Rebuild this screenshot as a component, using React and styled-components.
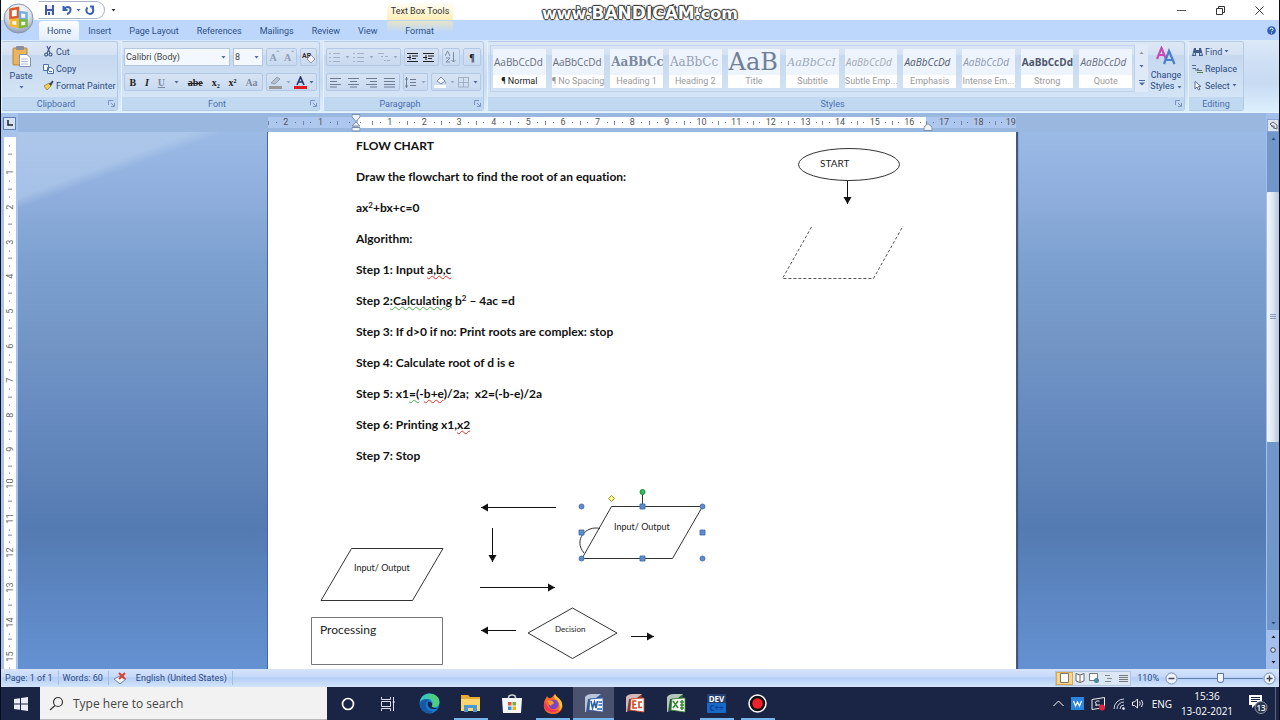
import styled, { createGlobalStyle } from "styled-components";

const GlobalStyle = createGlobalStyle`
  * { box-sizing: border-box; }
  body { margin: 0; font-family: Roboto, "Noto Sans", sans-serif; font-size: 9px; }
  button, input, select { font: inherit; color: inherit; margin: 0; }
  button { background: none; border: 0; padding: 0; }
  p { margin: 0; }
`;

const Window = styled.div`
  display: flex;
  flex-direction: column;
  height: 100vh;
  overflow: hidden;
  color: #2b4a80;
  background: #9ab7e0;
  border: solid #0a0d1c;
  border-width: 0 1px;
`;

/* ---------- title bar ---------- */

const TitleBar = styled.header`
  position: relative;
  display: grid;
  grid-template-columns: 386px 66px 1fr auto;
  flex: none;
  height: 20px;
  background: #fff;
`;

const QuickAccess = styled.div`
  display: flex;
  align-items: center;
  gap: 6px;
  padding-left: 37px;
`;

const QuickGroup = styled.div`
  display: flex;
  align-items: center;
  gap: 4px;
  height: 18px;
  padding: 0 9px 0 6px;
  border: 1px solid #a9b4c6;
  border-left-color: transparent;
  border-radius: 0 9px 9px 0;
`;

const IconButton = styled.button`
  display: flex;
  align-items: center;
  justify-content: center;
  gap: 2px;
`;

const OfficeButton = styled.button`
  position: absolute;
  z-index: 2;
  left: 2px;
  top: 3px;
  width: 31px;
  height: 31px;
`;

const ContextHeader = styled.div`
  margin-top: 3px;
  line-height: 16px;
  text-align: center;
  color: #333;
  background: linear-gradient(#fffdf6, #fbeeb4);
`;

const DocTitle = styled.div`
  padding-left: 122px;
  line-height: 20px;
  font-size: 10px;
  color: #444;
`;

const Watermark = styled.div`
  position: absolute;
  left: 50%;
  top: 4px;
  transform: translateX(-50%);
  font: bold 17px/18px "DejaVu Sans", sans-serif;
  color: #fff;
  text-shadow: 1px 0 1px #333, -1px 0 1px #333, 0 1px 1px #333, 0 -1px 1px #333, 0 0 2px #555;
  white-space: nowrap;

  small { font-size: 16px; }
`;

const WindowButtons = styled.div`
  display: flex;
  gap: 30px;
  padding-right: 15px;
`;

/* ---------- ribbon ---------- */

const TabStrip = styled.nav`
  display: flex;
  flex: none;
  align-items: stretch;
  height: 20px;
  padding: 1px 3px 0 38px;
  background: #bdd7fc;
`;

const Tab = styled.button`
  padding: 0 9px;
  color: #2e5086;
  border-radius: 3px 3px 0 0;
  ${(p) => p.$active && "background: linear-gradient(#fafdff, #e4eefb); padding: 0 8px;"}
`;

const ContextTab = styled(Tab)`
  width: 66px;
  background: linear-gradient(#e6e4c8, #bdd7fc 60%);
`;

const Spacer = styled.div`
  flex: 1;
`;

const Ribbon = styled.div`
  display: flex;
  flex: none;
  gap: 3px;
  height: 73px;
  padding: 1px 35px 1px 0;
  background: linear-gradient(#dce9f8, #cfe0f5 30%, #c8dbf3 60%, #dcf0fd);
  border-bottom: 1px solid #e2f4ff;
`;

const GroupBox = styled.section`
  display: flex;
  flex-direction: column;
  flex: ${(p) => (p.$width ? `0 0 ${p.$width}px` : "1 1 0")};
  min-width: 0;
  border: 1px solid #b4cbe8;
  border-left-color: #e8f2fd;
  border-radius: 3px;
  background: linear-gradient(#dde8f6 0, #d5e2f3 18%, #c6d8ef 20%, #d8e8f8 100%);
`;

const GroupBody = styled.div`
  display: flex;
  flex: 1;
  min-height: 0;
`;

const GroupFooter = styled.footer`
  display: flex;
  align-items: center;
  height: 13px;
  padding: 0 2px;
  color: #4c6fae;
  background: #c1d8f1;

  span { flex: 1; text-align: center; }
`;

const BigButton = styled.button`
  display: flex;
  flex-direction: column;
  align-items: center;
  gap: 4px;
  width: ${(p) => p.$width}px;
  padding-top: 4px;
  line-height: 11px;
`;

const ButtonStack = styled.div`
  display: flex;
  flex-direction: column;
  gap: 4px;
  padding: 3px 0 0 3px;
`;

const SmallButton = styled.button`
  display: flex;
  align-items: center;
  gap: 2px;
  height: 13px;
  white-space: nowrap;
`;

const Rows = styled.div`
  display: flex;
  flex: 1;
  flex-direction: column;
  gap: 7px;
  padding: 6px 2px 0 2px;
`;

const ToolRow = styled.div`
  display: flex;
  gap: 3px;
  height: 18px;
`;

const ToolSet = styled.div`
  display: flex;
  align-items: center;
  justify-content: space-around;
  flex: ${(p) => p.$grow ?? 1} 1 0;
  border: 1px solid #b3c8e5;
  border-radius: 2px;
  color: ${(p) => (p.$dim ? "#8d9ab0" : "#222")};
  font: bold 10px "Liberation Serif", serif;
  background: linear-gradient(#d6e3f4, #c9daf0);

  sup { font-size: 8px; line-height: 0; }
`;

const FaintButton = styled.button`
  color: #7c899f;
`;

const Combo = styled.label`
  display: flex;
  align-items: center;
  flex: 0 0 ${(p) => p.$width}px;
  padding-right: 3px;
  border: 1px solid #b3c7e1;
  background: #f3f8fe;
  color: #444;

  select {
    flex: 1;
    min-width: 0;
    appearance: none;
    border: 0;
    background: none;
    padding: 0 1px;
  }
`;

const Gallery = styled.div`
  display: flex;
  flex: 1;
  gap: 6px;
  height: 47px;
  margin: 3px 0 0 2px;
  padding: 3px 2px;
  border: 1px solid #bfd3ec;
`;

const StyleCard = styled.button`
  display: flex;
  flex-direction: column;
  flex: 1 1 0;
  min-width: 0;
  background: #fff;
  color: ${(p) => (p.$active ? "#222" : "#9a9a9a")};
`;

const StyleSample = styled.span`
  height: 27px;
  width: 100%;
  padding-left: 1px;
  overflow: hidden;
  text-align: left;
  white-space: nowrap;
  background: #eef4fe;
  font-family: ${(p) => (p.$serif ? '"DejaVu Serif", "Liberation Serif", serif' : '"Open Sans", sans-serif')};
  font-size: ${(p) => p.$size}px;
  line-height: 27px;
  font-weight: ${(p) => (p.$bold ? 700 : 400)};
  font-style: ${(p) => (p.$italic ? "italic" : "normal")};
  color: ${(p) => p.$color};
`;

const StyleName = styled.span`
  width: 100%;
  line-height: 13px;
  text-align: center;
  white-space: nowrap;
`;

const GalleryScroll = styled.div`
  display: flex;
  flex-direction: column;
  justify-content: space-around;
  width: 13px;
  height: 47px;
  margin-top: 3px;
  background: #dfe9f7;
`;

/* ---------- document area ---------- */

const Workspace = styled.main`
  display: flex;
  flex: 1;
  min-height: 0;
`;

const LeftRail = styled.div`
  display: flex;
  flex-direction: column;
  flex: none;
  width: 17px;
  background: #a9c4ec;
`;

const TabSelector = styled.button`
  flex: none;
  align-self: flex-start;
  width: 13px;
  height: 13px;
  margin: 4px 2px 7px;
  border: 1px solid #5f7fb2;
  background: #d5e3f8;
`;

const RulerWindow = styled.div`
  flex: 1;
  min-height: 0;
  overflow: hidden;
  margin: 0 2px 0 3px;
`;

const VerticalRuler = styled.div`
  display: flex;
  flex-direction: column;
  height: 537px;
  background: #fff;
  color: #666;
`;

const VerticalMark = styled.div`
  flex: ${(p) => p.$grow ?? 1} 1 0;
  display: flex;
  align-items: center;
  justify-content: space-between;
  writing-mode: vertical-rl;
  transform: rotate(180deg);
`;

const Center = styled.div`
  display: flex;
  flex-direction: column;
  flex: 1;
  min-width: 0;
`;

const RulerStrip = styled.div`
  display: flex;
  justify-content: center;
  flex: none;
  height: 19px;
  padding: 4px 0;
  background: #9ab7e0;
`;

const HorizontalRuler = styled.div`
  position: relative;
  display: flex;
  width: 748px;
  line-height: 11px;
  color: #555;
  background: linear-gradient(90deg, #adc7ee 12%, #fff 12%, #fff 88%, #adc7ee 88%);
`;

const HorizontalMark = styled.div`
  display: flex;
  align-items: center;
  justify-content: space-between;
  flex: ${(p) => p.$grow ?? 1} 1 0;
`;

const Tick = styled.i`
  width: ${(p) => (p.$flat ? 4 : 1)}px;
  height: ${(p) => (p.$flat ? 1 : 4)}px;
  background: #7786a0;
`;

const Dot = styled.i`
  width: 1px;
  height: 1px;
  background: #66748c;
`;

const IndentMarker = styled.svg`
  position: absolute;
  left: ${(p) => p.$at}%;
  bottom: -4px;
  transform: translateX(-50%);
`;

const Canvas = styled.div`
  display: flex;
  justify-content: center;
  flex: 1;
  min-height: 0;
  overflow: hidden;
  background:
    linear-gradient(to bottom right, #b9d2ee88 44%, #b9d2ee00 52%) 0 0 / 200px 74px no-repeat,
    linear-gradient(#9bbae5, #91afde 11%, #7ca1d0 24%, #7093c4 42%, #6489bf 55%, #547bb1 74%, #5c86c2 86%, #6491d2);
`;

const Page = styled.article`
  position: relative;
  width: 748px;
  padding: 6px 88px;
  background: #fff;
  box-shadow: 2px 0 1px #41577d, -1px 0 0 #4a6798;
  color: #111;
  font: bold 12px/16px Lato, sans-serif;
  font-variant-ligatures: none;

  p { margin-bottom: 15px; white-space: pre; }
  sup { font-size: 8px; line-height: 0; vertical-align: 4px; }
`;

const Flagged = styled.span`
  text-decoration: underline wavy ${(p) => p.$color} 1px;
  text-underline-offset: 1px;
  text-decoration-skip-ink: none;
`;

const Drawing = styled.svg`
  position: absolute;
  left: 0;
  top: 0;
`;

const ShapeLabel = styled.span`
  position: absolute;
  left: ${(p) => p.$x}px;
  top: ${(p) => p.$y}px;
  font-weight: 400;
  font-size: ${(p) => p.$size}px;
  color: #222;
`;

const ScrollRail = styled.div`
  display: flex;
  flex-direction: column;
  align-items: stretch;
  flex: none;
  width: 13px;
  padding-left: 1px;
  background: #a4c0ea;
`;

const RailButton = styled.button`
  display: flex;
  align-items: center;
  justify-content: center;
  height: 13px;
  ${(p) => p.$boxed && "border: 1px solid #8aa4cf; background: #dfe6f0; margin-top: 6px;"}
`;

const Track = styled.div`
  display: flex;
  flex-direction: column;
  flex: 1;
  background: #7196ca;
`;

const Thumb = styled.div`
  display: flex;
  align-items: center;
  justify-content: center;
  flex: ${(p) => p.$grow} 1 0;
  background: linear-gradient(90deg, #f4f8fe, #dde6f2 50%, #b3c5dd);
  border-radius: 1px;
`;

const Grow = styled.div`
  flex: ${(p) => p.$grow} 1 0;
`;

/* ---------- status bar ---------- */

const StatusBar = styled.footer`
  display: flex;
  align-items: center;
  flex: none;
  height: 18px;
  padding-right: 3px;
  background: linear-gradient(#d4e3f8, #c8dafa 40%, #b5cef6 50%, #d3e5fb);
`;

const StatusItem = styled.div`
  display: flex;
  align-items: center;
  gap: 8px;
  height: 14px;
  padding: 0 5px 0 4px;
  border-right: 1px solid #a4bde2;
`;

const ViewButtons = styled.div`
  display: flex;
  width: 76px;
  height: 15px;
  background: #dce7f5;
  border: 1px solid #b2c4de;
`;

const ViewButton = styled.button`
  display: flex;
  flex: 1;
  align-items: center;
  justify-content: center;
  ${(p) => p.$on && "background: #fcd588; border: 1px solid #d6a84f;"}
`;

const ZoomValue = styled.span`
  margin: 0 6px;
`;

const ZoomSlider = styled.input`
  width: 85px;
  height: 14px;
  appearance: none;
  background: linear-gradient(#5f7fae, #5f7fae) center / 100% 1px no-repeat;

  &::-webkit-slider-thumb {
    appearance: none;
    width: 7px;
    height: 10px;
    border: 1px solid #5f7499;
    border-radius: 1px 1px 4px 4px;
    background: #f3f8ff;
  }
`;

/* ---------- taskbar ---------- */

const Taskbar = styled.footer`
  display: flex;
  flex: none;
  height: 33px;
  background: #1a2545;
  color: #fff;
  font-family: "Open Sans", "Noto Sans", sans-serif;
`;

const StartButton = styled(IconButton)`
  width: 39px;
`;

const SearchBox = styled.label`
  display: flex;
  align-items: center;
  gap: 9px;
  width: 287px;
  padding-left: 9px;
  background: #f2f2f2;
  border-bottom: 1px solid #b9b9b9;

  input {
    flex: 1;
    min-width: 0;
    border: 0;
    background: none;
    padding: 0;
    font-size: 12px;
  }
  input::placeholder { color: #444; opacity: 1; }
`;

const TaskButton = styled.button`
  display: flex;
  align-items: center;
  justify-content: center;
  width: 41px;
  background: ${(p) => (p.$active ? "#4b5270" : "none")};
  background-image: ${(p) => (p.$open ? "linear-gradient(#76b4ec, #76b4ec)" : "none")};
  background-repeat: no-repeat;
  background-position: bottom center;
  background-size: ${(p) => (p.$active ? 41 : 34)}px 2px;
`;

const Tray = styled.div`
  display: flex;
  align-items: center;
  gap: 7px;
  padding-right: 3px;
  font-size: 10px;
`;

const Clock = styled.time`
  width: 56px;
  margin: 0 6px 0 0;
  line-height: 15px;
  text-align: center;
`;

const ShowDesktop = styled.div`
  width: 1px;
  height: 33px;
  background: #5a6482;
`;

const Caret = ({ color = "#4d6a9c", up }) => (
  <svg width="5" height="3" aria-hidden="true">
    <path d={up ? "M.5 3L2.500 .5L4.500 3z" : "M.5 0H4.500L2.500 2.500z"} fill={color} />
  </svg>
);

const Launcher = () => (
  <svg width="7" height="7" fill="none" stroke="#7b96c4" aria-hidden="true">
    <path d="M.5 5V.5H5M3 3L6 6M6.500 3V6.500H3" />
  </svg>
);

const Group = ({ title, width, children, plain }) => (
  <GroupBox $width={width}>
    <GroupBody>{children}</GroupBody>
    <GroupFooter>
      <span>{title}</span>
      {!plain && <Launcher />}
    </GroupFooter>
  </GroupBox>
);

const OfficeLogo = () => (
  <svg width="31" height="31" viewBox="0 0 31 31" aria-hidden="true">
    <defs>
      <radialGradient id="orb" cx="50%" cy="25%" r="75%">
        <stop offset="0" stopColor="#fff" />
        <stop offset=".6" stopColor="#d8dfea" />
        <stop offset="1" stopColor="#8d9bb5" />
      </radialGradient>
    </defs>
    <circle cx="15.500" cy="15.500" r="14.500" fill="url(#orb)" stroke="#8795b0" />
    <g fill="#fff9" strokeWidth="2.600">
      <path d="M7.500 6.500l7.500-1.500v9l-7.500 1z" stroke="#dd5a24" />
      <path d="M17 9l6.500 1v6H17z" stroke="#78b0e0" />
      <path d="M8 17h6.500v6.500L8 22.500z" stroke="#f4b92e" />
      <path d="M17 17.500h6.500v5.500l-6.500 1z" stroke="#7cb63c" />
    </g>
  </svg>
);

const SaveIcon = () => (
  <svg width="9" height="10" aria-hidden="true">
    <path d="M0 0H9V10H0z" fill="#4257a5" />
    <path d="M2 0H7V4H2zM2 6H7V10H2z" fill="#e8eefb" />
    <path d="M3 7H5V10H3z" fill="#4257a5" />
  </svg>
);

const UndoIcon = () => (
  <svg width="10" height="10" fill="none" stroke="#3c62b6" strokeWidth="2" aria-hidden="true">
    <path d="M1.500 1V5H5.500M2 4.500C4 1 8.500 1 8.500 4.500C8.500 7 7 8.500 5 9" />
  </svg>
);

const RedoIcon = () => (
  <svg width="10" height="10" fill="none" stroke="#3c62b6" strokeWidth="2" aria-hidden="true">
    <path d="M2.500 2.500C0 5.500 2 9 5 9S9.500 5 7 2.500M5 1.500H9M8 1V5" />
  </svg>
);

const PasteIcon = () => (
  <svg width="19" height="21" aria-hidden="true">
    <rect x="1" y="2" width="14" height="17" rx="1" fill="#e9b45c" stroke="#b98338" />
    <rect x="4" y="0" width="8" height="4" rx="1" fill="#8a8f9c" />
    <path d="M7.500 8.500H15L18.500 12V20.500H7.500z" fill="#fff" stroke="#7d93bb" />
    <path d="M9 13H16M9 15.500H16M9 18H16" stroke="#a9bbdc" />
  </svg>
);

const CutIcon = () => (
  <svg width="11" height="11" fill="none" stroke="#43598a" strokeWidth="1.200" aria-hidden="true">
    <path d="M4 0L7 7M7.500 0L4 7" />
    <circle cx="3.200" cy="8.500" r="1.500" />
    <circle cx="7.500" cy="8.500" r="1.500" />
  </svg>
);

const CopyIcon = () => (
  <svg width="11" height="11" fill="#f4f8ff" stroke="#4f70ad" aria-hidden="true">
    <path d="M.5 1.500H5.500V7.500H.5zM4.500 4.500H8L10.500 6.500V10.500H4.500z" />
    <path d="M6 8.500H9" />
  </svg>
);

const BrushIcon = () => (
  <svg width="11" height="11" aria-hidden="true">
    <path d="M1 6L6 3L8 6L4 10z" fill="#f2cf4a" stroke="#8a7328" strokeWidth=".7" />
    <path d="M6 4L9.500 0.500L10.500 1.500L8 6z" fill="#39435a" />
  </svg>
);

const ClearIcon = () => (
  <svg width="14" height="13" aria-hidden="true">
    <text x="0" y="7" fontSize="7" fontFamily="Roboto" fill="#333">AB</text>
    <path d="M5 8L9 4L13 8L9 12z" fill="#f6f1f4" stroke="#8a7f92" strokeWidth=".8" />
  </svg>
);

const Lines = ({ kind }) => {
  const paths = {
    left: "M0 1.500H11M0 4.500H7M0 7.500H11M0 10H7",
    center: "M0 1.500H11M2 4.500H9M0 7.500H11M2 10H9",
    right: "M0 1.500H11M4 4.500H11M0 7.500H11M4 10H11",
    justify: "M0 1.500H11M0 4.500H11M0 7.500H11M0 10H11",
    bullets: "M0 1.500H2M4 1.500H11M0 5.500H2M4 5.500H11M0 9.500H2M4 9.500H11",
    levels: "M0 1.500H6M3 4.500H5M7 4.500H10M6 8.500H8M9 8.500H12",
    outdent: "M0 1.500H11M5 4H11M5 6.500H9M0 9.500H11M3 3V8M0 5.500H4",
    spacing: "M1.500 0V11M0 2H3M0 9H3M5 2.500H11M5 5.500H11M5 8.500H11",
    border: "M.5 .5H11M.5 5.500H11M5.500 0V10M.5 0V10M10.500 0V10M0 10H11",
  };
  const tint = { bullets: "#a3b0c6", levels: "#a3b0c6", outdent: "#222", border: "#a3b0c6" };
  return (
    <svg width="12" height="11" fill="none" stroke={tint[kind] ?? "#6f7b92"} aria-hidden="true">
      <path d={paths[kind]} />
    </svg>
  );
};

const BucketIcon = () => (
  <svg width="13" height="12" aria-hidden="true">
    <path d="M3 5L7 1L11 5L7 8z" fill="#f4f7fc" stroke="#7d8ba6" />
    <path d="M11 5Q13 7 11 8z" fill="#8897b4" />
    <path d="M0 9H12V12H0z" fill="#fff" />
  </svg>
);

const StylesIcon = () => (
  <svg width="20" height="20" fill="none" strokeWidth="2.200" aria-hidden="true">
    <path d="M1 13L5.500 2L10 13M3 9H8" stroke="#c74ab6" />
    <path d="M8 18L13 5L18.500 18M10 14H16" stroke="#4a7fcb" />
  </svg>
);

const FindIcon = () => (
  <svg width="11" height="10" fill="#41598c" aria-hidden="true">
    <path d="M2 1H4V3H7V1H9L11 9H7V6H4V9H0z" />
    <path d="M1.500 6H3V8H1.500zM8 6H9.500V8H8z" fill="#c5d4ec" />
  </svg>
);

const ReplaceIcon = () => (
  <svg width="11" height="10" fill="none" stroke="#55698f" aria-hidden="true">
    <path d="M0 1.500H4M.5 4.500H4M6 4V6H3" />
    <path d="M5 8.500H11M5 6.500H10" stroke="#557a55" />
  </svg>
);

const PointerIcon = () => (
  <svg width="11" height="10" fill="#fff" stroke="#5e6f92" aria-hidden="true">
    <path d="M3 .5V8L5 6L6.500 9L8 8.500L6.500 5.500H9z" />
  </svg>
);

const EdgeIcon = () => (
  <svg width="21" height="21" viewBox="0 0 21 21" aria-hidden="true">
    <circle cx="10.500" cy="10.500" r="10" fill="#1b79cc" />
    <path d="M.8 9C2 2 8 0 12 .7C18 1.500 21 6 20.300 10C19.800 14 15 15 12.500 13.500C15 11 13 6.500 9 6C5 5.600 2 7 .8 9z" fill="#3cc6b4" />
    <path d="M13 .8C18 2 21 6 20.300 10C19.800 14 15 15 12.500 13.500C15.500 10 14 5 9 4z" fill="#55d06a" opacity=".7" />
    <path d="M8 8.500C5 12 7.500 18 14 18.500C10 22 1 19 .7 11C2 7 7 5 10 7z" fill="#1459a8" />
    <path d="M9.500 8.500C7.500 11 9 15.500 14 16C17 16 18 15.500 19 15C17.500 15.200 14.500 15.500 12.500 13.500C14.200 11.500 12.500 8.500 9.500 8.500z" fill="#1a2545" />
  </svg>
);

const FolderIcon = () => (
  <svg width="20" height="17" aria-hidden="true">
    <path d="M0 0H7L9 2H19V16H0z" fill="#e7a93a" />
    <path d="M0 4H19V16H0z" fill="#fbd56d" />
    <path d="M3 10H16V17H12V13H7V17H3z" fill="#4a9ad8" />
  </svg>
);

const StoreIcon = () => (
  <svg width="20" height="20" aria-hidden="true">
    <path d="M6.500 6V3.500Q6.500 1 10 1T13.500 3.500V6" fill="none" stroke="#c8cdd8" strokeWidth="1.500" />
    <path d="M0 4H20L19 19H1z" fill="#f5f7fa" />
    <path d="M6 8H9.500V11.500H6z" fill="#e65432" />
    <path d="M10.500 8H14V11.500H10.500z" fill="#6db33f" />
    <path d="M6 12.500H9.500V16H6z" fill="#2f96dc" />
    <path d="M10.500 12.500H14V16H10.500z" fill="#f2b01e" />
  </svg>
);

const FirefoxIcon = () => (
  <svg width="20" height="20" aria-hidden="true">
    <path d="M1 10C1 6 3 5 4 2C5 4 6 4 7 4C9 4 10 2 12 0C13 3 16 4 18 7C22 14 17 20 10 20S0 15 1 10z" fill="#fb6a2c" />
    <path d="M12 0C13 3 16 4 18 7C20 11 19 15 16 17C18 12 16 6 12 5C11 3 11 2 12 0z" fill="#ffc833" />
    <path d="M2 7C4 14 8 17 15 16C12 20 2 19 1 11z" fill="#f2325a" />
    <circle cx="10.500" cy="10.500" r="4.800" fill="#7a45c9" />
    <path d="M5 7C8 6 10 7 11 9C10 11 8 10 8 12C6 11 5 9 5 7z" fill="#ff9b2f" />
  </svg>
);

const OfficeDoc = ({ color, children }) => (
  <svg width="20" height="20" aria-hidden="true">
    <path d="M1 3Q3 0 8 0H17V12L2 18H1z" fill={color} opacity=".55" />
    <path d="M1 3Q3 0 8 0H17L12 4L4 5L2 18H1z" fill="#fff" opacity=".65" />
    <path d="M6 5L19 4V18L5 16z" fill="#fff" stroke={color} strokeWidth=".8" />
    <g fill="none" stroke={color} strokeWidth="1.600">{children}</g>
  </svg>
);

const DevIcon = () => (
  <svg width="19" height="19" viewBox="0 0 19 19" aria-hidden="true">
    <rect width="19" height="19" rx="1" fill="#1669c4" />
    <rect width="19" height="9" fill="#26406e" />
    <text x="9.500" y="8" fontSize="8" fontWeight="700" textAnchor="middle" fill="#fff">DEV</text>
    <text x="9.500" y="17" fontSize="8" fontWeight="700" textAnchor="middle" fill="#0b3ea0">C++</text>
  </svg>
);

const RecordIcon = () => (
  <svg width="19" height="19" aria-hidden="true">
    <circle cx="9.500" cy="9.500" r="8.500" fill="#111" stroke="#fff" strokeWidth="1.500" />
    <circle cx="9.500" cy="9.500" r="5.200" fill="#f0202c" />
  </svg>
);

const styleCards = [
  { name: "¶ Normal", sample: "AaBbCcDd", size: 10, color: "#666e7c" },
  { name: "¶ No Spacing", sample: "AaBbCcDd", size: 10, color: "#666e7c" },
  { name: "Heading 1", sample: "AaBbCc", size: 12, color: "#7d8a9e", serif: true, bold: true },
  { name: "Heading 2", sample: "AaBbCc", size: 12, color: "#94a1b4", serif: true },
  { name: "Title", sample: "AaB", size: 24, color: "#6f7f98", serif: true },
  { name: "Subtitle", sample: "AaBbCcI", size: 11, color: "#9da9bb", serif: true, italic: true },
  { name: "Subtle Emp...", sample: "AaBbCcDd", size: 10, color: "#a3a9b4", italic: true },
  { name: "Emphasis", sample: "AaBbCcDd", size: 10, color: "#525b6b", italic: true },
  { name: "Intense Em...", sample: "AaBbCcDd", size: 10, color: "#8c99ae", italic: true },
  { name: "Strong", sample: "AaBbCcDd", size: 10, color: "#4d5668", bold: true },
  { name: "Quote", sample: "AaBbCcDd", size: 10, color: "#666e7c", italic: true },
];

const horizontalMarks = ["2", "1", "", ...Array.from({ length: 18 }, (_, i) => String(i + 1))];
const verticalMarks = Array.from({ length: 15 }, (_, i) => String(i + 1));

const Arrow = ({ x1, y1, x2, y2 }) => {
  const angle = (Math.atan2(y2 - y1, x2 - x1) * 180) / Math.PI;
  return (
    <g stroke="#111" fill="#111">
      <path d={`M${x1} ${y1}L${x2} ${y2}`} />
      <path d="M0 0L-7 -4V4z" stroke="none" transform={`translate(${x2} ${y2}) rotate(${angle})`} />
    </g>
  );
};

const Flowchart = () => (
  <>
    <Drawing width="748" height="537" fill="none" stroke="#333" aria-hidden="true">
      <ellipse cx="581" cy="32.500" rx="50.500" ry="16" />
      <path d="M543.500 95L514.500 146.500H605.500L635 94" strokeDasharray="3 2" stroke="#555" />
      <path d="M83.500 416.500H175L144.500 468.500H53z" />
      <path d="M43.500 485.500H174.500V532.500H43.500z" stroke="#777" />
      <path d="M304.500 476L349 501L304.500 526.500L260 501z" />
      <path d="M343.500 374.500H434.500L404.500 426.500H314z" />
      <path d="M332 396.500C318 393 305 408 316 421" />
      <path d="M374.500 360V374" />
      <g fill="#5f8dd0" stroke="#3b64a6" strokeWidth=".8">
        <circle cx="313.500" cy="374.500" r="2.500" />
        <circle cx="434.500" cy="374.500" r="2.500" />
        <circle cx="313.500" cy="426.500" r="2.500" />
        <circle cx="434.500" cy="426.500" r="2.500" />
        <path d="M311 398H316V403H311zM432 398H437V403H432zM372 372H377V377H372zM372 424H377V429H372z" />
      </g>
      <circle cx="374.500" cy="360" r="2.500" fill="#35c15b" stroke="#1a8a3c" />
      <path d="M343.500 363.500L346.500 366.500L343.500 369.500L340.500 366.500z" fill="#ffff8a" stroke="#98952a" />
      <Arrow x1={579.5} y1={49} x2={579.5} y2={72} />
      <Arrow x1={288} y1={375.5} x2={213} y2={375.5} />
      <Arrow x1={224.5} y1={396} x2={224.5} y2={430} />
      <Arrow x1={212} y1={455.5} x2={287} y2={455.5} />
      <Arrow x1={248} y1={498.5} x2={213} y2={498.5} />
      <Arrow x1={363} y1={504.5} x2={386} y2={504.5} />
    </Drawing>
    <ShapeLabel $x={552} $y={23} $size={10}>START</ShapeLabel>
    <ShapeLabel $x={86} $y={428} $size={9}>Input/ Output</ShapeLabel>
    <ShapeLabel $x={346} $y={387} $size={9}>Input/ Output</ShapeLabel>
    <ShapeLabel $x={52} $y={490} $size={12}>Processing</ShapeLabel>
    <ShapeLabel $x={287} $y={489} $size={8}>Decision</ShapeLabel>
  </>
);

export default function App() {
  return (
    <Window>
      <GlobalStyle />
      <TitleBar>
        <OfficeButton aria-label="Office Button"><OfficeLogo /></OfficeButton>
        <QuickAccess>
          <QuickGroup>
            <IconButton aria-label="Save"><SaveIcon /></IconButton>
            <Spacer />
            <IconButton aria-label="Undo"><UndoIcon /></IconButton>
            <Caret />
            <IconButton aria-label="Redo"><RedoIcon /></IconButton>
          </QuickGroup>
          <IconButton aria-label="Customize Quick Access Toolbar"><Caret color="#333" /></IconButton>
        </QuickAccess>
        <ContextHeader>Text Box Tools</ContextHeader>
        <DocTitle>Document1 - Microsoft Word</DocTitle>
        <WindowButtons>
          <IconButton aria-label="Minimize">
            <svg width="9" height="10"><path d="M0 5.500H9" stroke="#555" /></svg>
          </IconButton>
          <IconButton aria-label="Restore">
            <svg width="9" height="9" fill="none" stroke="#333"><path d="M.5 2.500H6.500V8.500H.5zM2.500 2V.5H8.500V6.500H7" /></svg>
          </IconButton>
          <IconButton aria-label="Close">
            <svg width="9" height="9" stroke="#333"><path d="M.5 .5L8.500 8.500M8.500 .5L.5 8.500" /></svg>
          </IconButton>
        </WindowButtons>
        <Watermark><small>www.</small>BANDICAM<small>.com</small></Watermark>
      </TitleBar>

      <TabStrip>
        <Tab $active>Home</Tab>
        <Tab>Insert</Tab>
        <Tab>Page Layout</Tab>
        <Tab>References</Tab>
        <Tab>Mailings</Tab>
        <Tab>Review</Tab>
        <Tab>View</Tab>
        <ContextTab>Format</ContextTab>
        <Spacer />
        <IconButton aria-label="Help">
          <svg width="9" height="9"><circle cx="4.500" cy="4.500" r="4.300" fill="#2d5fb4" /><path d="M3 3.500Q3 2 4.500 2T6 3.500Q6 4.500 4.500 5M4.500 6.500V7.500" fill="none" stroke="#fff" /></svg>
        </IconButton>
      </TabStrip>

      <Ribbon>
        <Group title="Clipboard" width={117}>
          <BigButton $width={38}><PasteIcon />Paste<Caret /></BigButton>
          <ButtonStack>
            <SmallButton><CutIcon />Cut</SmallButton>
            <SmallButton><CopyIcon />Copy</SmallButton>
            <SmallButton><BrushIcon />Format Painter</SmallButton>
          </ButtonStack>
        </Group>

        <Group title="Font" width={199}>
          <Rows>
            <ToolRow>
              <Combo $width={106}>
                <select aria-label="Font"><option>Calibri (Body)</option></select>
                <Caret />
              </Combo>
              <Combo $width={30}>
                <select aria-label="Font size"><option>8</option></select>
                <Caret />
              </Combo>
              <ToolSet $grow={2} $dim>
                <button aria-label="Grow font">A<sup>ˆ</sup></button>
                <button aria-label="Shrink font">A<sup>ˇ</sup></button>
              </ToolSet>
              <ToolSet>
                <IconButton aria-label="Clear formatting"><ClearIcon /></IconButton>
              </ToolSet>
            </ToolRow>
            <ToolRow>
              <ToolSet $grow={14}>
                <button>B</button><button><i>I</i></button><FaintButton><u>U</u></FaintButton><Caret />
                <button><s>abe</s></button><button>x₂</button><button>x²</button><FaintButton>Aa</FaintButton>
              </ToolSet>
              <ToolSet $grow={5}>
                <IconButton aria-label="Highlight">
                  <svg width="14" height="13"><path d="M2 7L8 1L11 3L6 8z" fill="#b8c0cc" stroke="#7c8798" strokeWidth=".7" /><path d="M0 10H13V13H0z" fill="#999" /></svg>
                </IconButton>
                <Caret color="#98a9c6" />
                <IconButton aria-label="Font colour">
                  <svg width="13" height="13"><path d="M3 9L6.500 1L10 9M4 6H9" fill="none" stroke="#26366b" strokeWidth="1.600" /><path d="M0 10H13V13H0z" fill="#e01b24" /></svg>
                </IconButton>
                <Caret />
              </ToolSet>
            </ToolRow>
          </Rows>
        </Group>

        <Group title="Paragraph" width={161}>
          <Rows>
            <ToolRow>
              <ToolSet $grow={9}>
                <Lines kind="bullets" /><Caret color="#98a9c6" /><Lines kind="bullets" /><Caret color="#98a9c6" /><Lines kind="levels" /><Caret color="#98a9c6" />
              </ToolSet>
              <ToolSet $grow={4}><Lines kind="outdent" /><Lines kind="outdent" /></ToolSet>
              <ToolSet $grow={2} $dim>
                <svg width="11" height="12" fill="none" stroke="#7b8aa6"><path d="M0 5L2.500 0L5 5M1 7H5L1 11H5M8.500 1V11M6.500 9L8.500 11L10.500 9" /></svg>
              </ToolSet>
              <ToolSet $grow={2}><button>¶</button></ToolSet>
            </ToolRow>
            <ToolRow>
              <ToolSet $grow={9}><Lines kind="left" /><Lines kind="center" /><Lines kind="right" /><Lines kind="justify" /></ToolSet>
              <ToolSet $grow={3}><Lines kind="spacing" /><Caret color="#98a9c6" /></ToolSet>
              <ToolSet $grow={6}><BucketIcon /><Caret color="#98a9c6" /><Lines kind="border" /><Caret /></ToolSet>
            </ToolRow>
          </Rows>
        </Group>

        <Group title="Styles">
          <Gallery>
            {styleCards.map((card, i) => (
              <StyleCard key={card.name} $active={i === 0}>
                <StyleSample $size={card.size} $color={card.color} $serif={card.serif} $bold={card.bold} $italic={card.italic}>
                  {card.sample}
                </StyleSample>
                <StyleName>{card.name}</StyleName>
              </StyleCard>
            ))}
          </Gallery>
          <GalleryScroll>
            <IconButton aria-label="Previous styles"><Caret up color="#9a9a9a" /></IconButton>
            <IconButton aria-label="Next styles"><Caret /></IconButton>
            <IconButton aria-label="More styles">
              <svg width="6" height="6"><path d="M0 .5H6" stroke="#4d6a9c" /><path d="M0 2.500H6L3 5.500z" fill="#4d6a9c" /></svg>
            </IconButton>
          </GalleryScroll>
          <BigButton $width={36}>
            <StylesIcon />
            <span>Change<br />Styles <Caret /></span>
          </BigButton>
        </Group>

        <Group title="Editing" width={56} plain>
          <ButtonStack>
            <SmallButton><FindIcon />Find <Caret /></SmallButton>
            <SmallButton><ReplaceIcon />Replace</SmallButton>
            <SmallButton><PointerIcon />Select <Caret /></SmallButton>
          </ButtonStack>
        </Group>
      </Ribbon>

      <Workspace>
        <LeftRail>
          <TabSelector aria-label="Tab selector">
            <svg width="11" height="9"><path d="M4 2V7H9" fill="none" stroke="#222" strokeWidth="1.500" /></svg>
          </TabSelector>
          <RulerWindow>
            <VerticalRuler>
              <VerticalMark $grow={0.5}><i /><Dot /><i /></VerticalMark>
              {verticalMarks.map((n) => (
                <VerticalMark key={n}><i /><Dot />{n}<Dot /><Tick $flat /></VerticalMark>
              ))}
            </VerticalRuler>
          </RulerWindow>
        </LeftRail>

        <Center>
          <RulerStrip>
            <HorizontalRuler>
              {horizontalMarks.map((n, i) => (
                <HorizontalMark key={i}><Tick /><Dot />{n}<Dot /><i /></HorizontalMark>
              ))}
              <HorizontalMark $grow={0.59}><Tick /><Dot />19</HorizontalMark>
              <IndentMarker $at={11.8} width="9" height="18" fill="#eef3fb" stroke="#7c8ba8">
                <path d="M.5 .5H8.500V3L4.500 7.500L.5 3zM4.500 8L8.500 12H.5zM.5 13.500H8.500V17H.5z" />
              </IndentMarker>
              <IndentMarker $at={88.2} width="9" height="9" fill="#eef3fb" stroke="#7c8ba8">
                <path d="M4.500 .5L8.500 4V7.500H.5V4z" />
              </IndentMarker>
            </HorizontalRuler>
          </RulerStrip>
          <Canvas>
            <Page>
              <p>FLOW CHART</p>
              <p>Draw the flowchart to find the root of an equation:</p>
              <p>ax<sup>2</sup>+bx+c=0</p>
              <p>Algorithm:</p>
              <p>Step 1: Input <Flagged $color="#e0322e">a,b,c</Flagged></p>
              <p>Step 2<Flagged $color="#4caf50">:Calculating</Flagged> b<sup>2</sup> – 4ac =d</p>
              <p>Step 3: If d&gt;0 if no: Print roots are complex: stop</p>
              <p>Step 4: Calculate root of d is e</p>
              <p>Step 5: x1<Flagged $color="#4caf50">=(</Flagged>-<Flagged $color="#e0322e">b+e</Flagged>)/2a;  x2=(-b-e)/2a</p>
              <p>Step 6: Printing x1,<Flagged $color="#e0322e">x2</Flagged></p>
              <p>Step 7: Stop</p>
              <Flowchart />
            </Page>
          </Canvas>
        </Center>

        <ScrollRail>
          <RailButton $boxed aria-label="View Ruler">
            <svg width="9" height="9" fill="none" stroke="#667"><path d="M1 3L4 1L8 4V8L5 7zM2 5H5V8" /></svg>
          </RailButton>
          <Track>
            <RailButton aria-label="Scroll up"><Caret up color="#2e4a7c" /></RailButton>
            <Grow $grow={46} />
            <Thumb $grow={248}>
              <svg width="6" height="6" stroke="#8899b5"><path d="M0 .5H6M0 2.500H6M0 4.500H6" /></svg>
            </Thumb>
            <Grow $grow={173} />
            <RailButton aria-label="Scroll down"><Caret color="#2e4a7c" /></RailButton>
          </Track>
          <RailButton aria-label="Previous page"><Caret up color="#223" /></RailButton>
          <RailButton aria-label="Browse object">
            <svg width="6" height="6"><circle cx="3" cy="3" r="2.300" fill="#dbe6f7" stroke="#445" /></svg>
          </RailButton>
          <RailButton aria-label="Next page"><Caret color="#223" /></RailButton>
        </ScrollRail>
      </Workspace>

      <StatusBar>
        <StatusItem>Page: 1 of 1</StatusItem>
        <StatusItem>Words: 60</StatusItem>
        <StatusItem>
          <svg width="15" height="13">
            <path d="M1 7L7 4L13 7L7 12z" fill="#f4f7fc" stroke="#6f82a8" />
            <path d="M6 1L12 7M12 1L6 7" stroke="#d8402c" strokeWidth="2" />
          </svg>
          English (United States)
        </StatusItem>
        <Spacer />
        <ViewButtons>
          <ViewButton $on aria-label="Print Layout"><svg width="9" height="10"><path d="M.5 .5H8.500V9.500H.5z" fill="#fff" stroke="#777" /></svg></ViewButton>
          <ViewButton aria-label="Full Screen Reading"><svg width="10" height="10" fill="#fff" stroke="#666"><path d="M5 2L1 .5V8L5 9.500L9 8V.5zM5 2V9.500" /></svg></ViewButton>
          <ViewButton aria-label="Web Layout"><svg width="10" height="10"><path d="M.5 .5H8.500V7.500H.5z" fill="#fff" stroke="#777" /><circle cx="7.500" cy="7.500" r="2.500" fill="#4a8a9c" /></svg></ViewButton>
          <ViewButton aria-label="Outline"><svg width="9" height="9"><path d="M1 1.500H6M3 4.500H8M1 7.500H7" stroke="#888" /></svg></ViewButton>
          <ViewButton aria-label="Draft"><svg width="9" height="9"><path d="M0 1.500H9M0 3.500H9M0 5.500H9M0 7.500H9" stroke="#777" /></svg></ViewButton>
        </ViewButtons>
        <ZoomValue>110%</ZoomValue>
        <IconButton aria-label="Zoom Out">
          <svg width="13" height="13"><circle cx="6.500" cy="6.500" r="5.500" fill="#eef4fd" stroke="#7288b0" /><path d="M3.500 6.500H9.500" stroke="#445" strokeWidth="1.500" /></svg>
        </IconButton>
        <ZoomSlider type="range" aria-label="Zoom" min="0" max="100" defaultValue="50" />
        <IconButton aria-label="Zoom In">
          <svg width="13" height="13"><circle cx="6.500" cy="6.500" r="5.500" fill="#eef4fd" stroke="#7288b0" /><path d="M3.500 6.500H9.500M6.500 3.500V9.500" stroke="#445" strokeWidth="1.500" /></svg>
        </IconButton>
      </StatusBar>

      <Taskbar>
        <StartButton aria-label="Start">
          <svg width="14" height="14" fill="#e9edf5"><path d="M0 2L6 1.200V6.500H0zM7 1L14 0V6.500H7zM0 7.500H6V12.800L0 12zM7 7.500H14V14L7 13z" /></svg>
        </StartButton>
        <SearchBox>
          <svg width="15" height="15" fill="none" stroke="#333" strokeWidth="1.200"><circle cx="9" cy="6" r="4.500" /><path d="M6 9.500L1 14" /></svg>
          <input type="text" aria-label="Search" placeholder="Type here to search" />
        </SearchBox>
        <TaskButton aria-label="Cortana"><svg width="14" height="14"><circle cx="7" cy="7" r="5.500" fill="none" stroke="#fff" strokeWidth="1.700" /></svg></TaskButton>
        <TaskButton aria-label="Task View"><svg width="15" height="14" fill="none" stroke="#dde"><path d="M.5 0V2.500H9.500V0M.5 14V11.500H9.500V14M.5 4.500H9.500V9.500H.5zM12.500 0V14M11.500 5H14" /></svg></TaskButton>
        <TaskButton aria-label="Edge"><EdgeIcon /></TaskButton>
        <TaskButton $open aria-label="File Explorer"><FolderIcon /></TaskButton>
        <TaskButton aria-label="Store"><StoreIcon /></TaskButton>
        <TaskButton $open aria-label="Firefox"><FirefoxIcon /></TaskButton>
        <TaskButton $open $active aria-label="Word"><OfficeDoc color="#2c5fae"><path d="M7 7L8.500 14L10.500 8L12 14L13.500 7M14.500 8H18M14.500 11H18M13 15H18" /></OfficeDoc></TaskButton>
        <TaskButton aria-label="PowerPoint"><OfficeDoc color="#d2482a"><path d="M11.500 7H8V14H12M8 10.500H11M17 8H14V13.500H17" /></OfficeDoc></TaskButton>
        <TaskButton aria-label="Excel"><OfficeDoc color="#3c8a34"><path d="M7 7L12 14M12 7L7 14M14 8H18M14 11H18M14 14H18M16 6V16" /></OfficeDoc></TaskButton>
        <TaskButton $open aria-label="Dev-C++"><DevIcon /></TaskButton>
        <TaskButton $open aria-label="Bandicam"><RecordIcon /></TaskButton>
        <Spacer />
        <Tray>
          <svg width="11" height="7" fill="none" stroke="#fff"><path d="M.5 6L5.500 1L10.500 6" /></svg>
          <svg width="13" height="13"><rect width="13" height="13" fill="#2b86e0" /><path d="M2.500 4L4.500 9L6.500 5L8.500 9L10.500 4" fill="none" stroke="#fff" strokeWidth="1.200" /></svg>
          <svg width="15" height="14" fill="none" stroke="#eee"><path d="M1 2.500L13.500 .5V10.500L1 12.500zM4 6Q5 3 8.500 4M5 8H9M5 6V9" /><circle cx="11" cy="10.500" r="3" fill="#e0253a" stroke="none" /></svg>
          <svg width="12" height="12" fill="none" stroke="#cfd5e2"><path d="M1 11A10 10 0 0 1 11 1M4 11A7 7 0 0 1 11 4M7 11A4 4 0 0 1 11 7" /><circle cx="10.500" cy="10.500" r="1" fill="#fff" /></svg>
          <svg width="13" height="11" fill="none" stroke="#eee"><path d="M.5 4V7.500H2.500L5.500 10V1L2.500 4zM7.500 3.500Q9 5.500 7.500 7.500M9.500 2Q12 5.500 9.500 9" /></svg>
          <span>ENG</span>
          <Clock>15:36<br />13-02-2021</Clock>
          <IconButton aria-label="Notifications">
            <svg width="20" height="21">
              <path d="M1 2H14V12H7L4 15V12H1z" fill="#fff" />
              <path d="M3 4.500H12M3 6.500H12M3 8.500H9" stroke="#1a2545" />
              <circle cx="13" cy="14.500" r="6" fill="#2a3350" stroke="#8b93a8" />
              <text x="13" y="17.500" fontSize="8" fontWeight="600" textAnchor="middle" fill="#fff">13</text>
            </svg>
          </IconButton>
          <ShowDesktop />
        </Tray>
      </Taskbar>
    </Window>
  );
}
